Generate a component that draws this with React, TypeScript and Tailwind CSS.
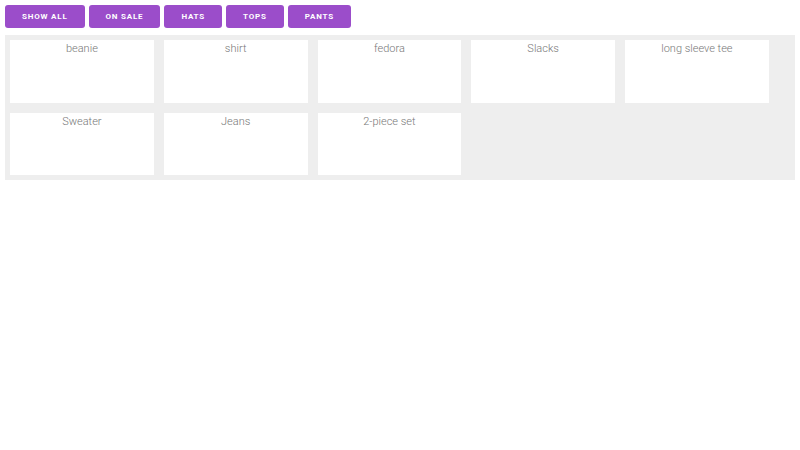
import React from "react";

const buttons = ["Show all", "On sale", "Hats", "Tops", "Pants"];
const items = ["beanie", "shirt", "fedora", "Slacks", "long sleeve tee", "Sweater", "Jeans", "2-piece set"];

export default function App() {
  return (
    <div className="w-[800px] h-[450px] bg-white p-[5px]" style={{ fontFamily: "Roboto, 'Liberation Sans', sans-serif" }}>
      <div className="flex gap-[4px]">
        {buttons.map((b) => (
          <button
            key={b}
            className="h-[23px] px-[17px] rounded-[3px] bg-[#9b4dca] text-white text-[8px] font-bold uppercase tracking-[0.1em] leading-none"
          >
            {b}
          </button>
        ))}
      </div>
      <div className="mt-[7px] bg-[#eeeeee] flex flex-wrap">
        {items.map((it) => (
          <div key={it} className="m-[5px] w-[143.75px] h-[62.5px] bg-white text-center text-[11px] font-light text-[#777777] leading-[16px] pt-[1px]">
            {it}
          </div>
        ))}
      </div>
    </div>
  );
}
